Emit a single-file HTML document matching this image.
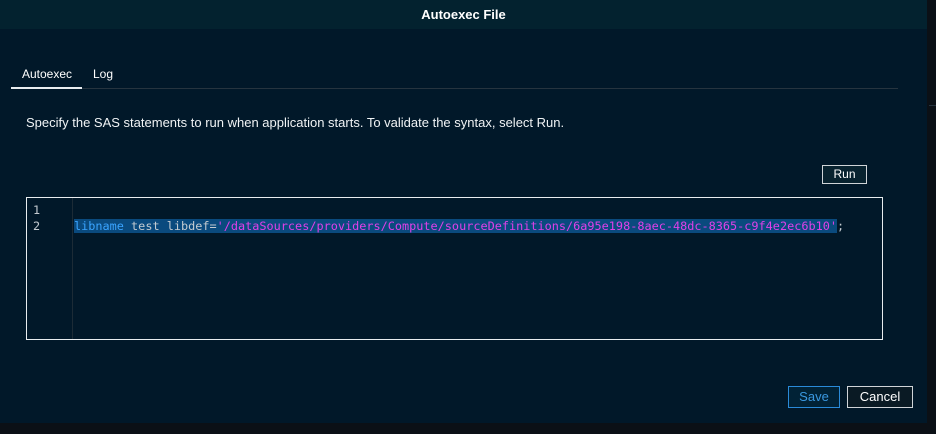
<!DOCTYPE html>
<html><head><style>
*{margin:0;padding:0;box-sizing:border-box}
body{width:936px;height:434px;background:#0b1016;position:relative;overflow:hidden;font-family:"Liberation Sans",sans-serif;}
.dlg{position:absolute;left:0;top:0;width:927px;height:423px;background:#011829;}
.hdr{height:29px;background:#03222f;color:#fff;font-weight:bold;font-size:13px;text-align:center;line-height:29px;}
.tab{position:absolute;top:67px;font-size:12px;color:#fff;}
.tabline{position:absolute;left:11px;top:88px;width:887px;height:1px;background:#26343f;}
.tabsel{position:absolute;left:11px;top:87px;width:71px;height:2px;background:#e8ecef;}
.desc{position:absolute;left:26px;top:115px;font-size:13px;color:#f0f3f5;}
.run{position:absolute;left:822px;top:165px;width:45px;height:19px;border:1px solid #d0d4d8;background:#08222f;color:#fff;font-size:12px;text-align:center;line-height:17px;}
.ed{position:absolute;left:26px;top:197px;width:857px;height:143px;border:1px solid #e8ecef;background:#011829;}
.gut{position:absolute;left:45px;top:0;width:1px;height:141px;background:#1c2b36;}
.ln{position:absolute;left:6px;font:11.85px "DejaVu Sans Mono",monospace;color:#c4cbd1;}
.code{position:absolute;left:47px;top:21px;font:11.85px "DejaVu Sans Mono",monospace;white-space:pre;color:#c4cbd1;line-height:14px;}
.sel{background:#0a4a7e;}
.kw{color:#3aa4ff}.str{color:#e040e8}
.btn{position:absolute;top:386px;height:22px;font-size:13px;text-align:center;line-height:20px;}
.side{position:absolute;left:929px;top:105px;width:7px;height:1px;background:#26343f}
</style></head><body>
<div class="dlg">
<div class="hdr">Autoexec File</div>
<div class="tab" style="left:22px">Autoexec</div>
<div class="tab" style="left:93px">Log</div>
<div class="tabline"></div><div class="tabsel"></div>
<div class="desc">Specify the SAS statements to run when application starts. To validate the syntax, select Run.</div>
<div class="run">Run</div>
<div class="ed">
<div class="gut"></div>
<div class="ln" style="top:5px">1</div>
<div class="ln" style="top:21px">2</div>
<div class="code"><span class="sel"><span class="kw">libname</span> test libdef=<span class="str">'/dataSources/providers/Compute/sourceDefinitions/6a95e198-8aec-48dc-8365-c9f4e2ec6b10'</span></span>;</div>
</div>
<div class="btn" style="left:788px;width:52px;border:1px solid #2a8ad8;color:#3a98e0;background:#012236">Save</div>
<div class="btn" style="left:847px;width:66px;border:1px solid #d0d4d8;color:#fff;background:#0a1a24">Cancel</div>
</div>
<div class="side"></div>
</body></html>
